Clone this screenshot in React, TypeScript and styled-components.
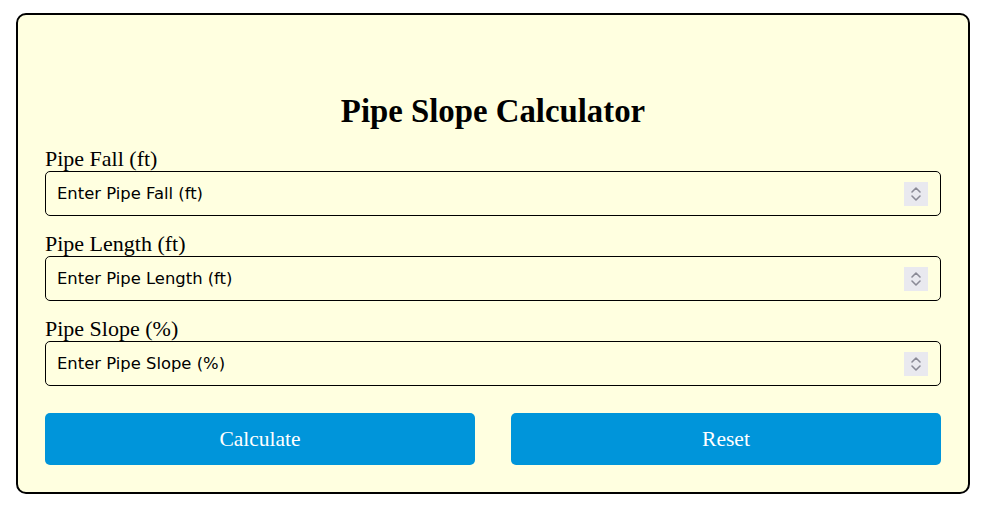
import React from "react";
import styled, { createGlobalStyle } from "styled-components";

const Global = createGlobalStyle`
  html, body { margin: 0; padding: 0; background: #ffffff; }
  body { font-family: "Liberation Serif", "Times New Roman", serif; }
  * { box-sizing: border-box; }
`;

const Page = styled.div`
  padding: 13px 13px 0 16px;
`;

const Card = styled.form`
  width: 954px;
  height: 481px;
  background: #ffffe0;
  border: 2px solid #000;
  border-radius: 10px;
  padding: 78px 27px 0 27px;
  display: flex;
  flex-direction: column;
`;

const Title = styled.h1`
  margin: 0 0 18px 0;
  text-align: center;
  font-size: 32.8px;
  line-height: 36px;
  font-weight: bold;
  color: #000;
`;

const Field = styled.div`
  display: flex;
  flex-direction: column;
  margin-bottom: 16px;
`;

const Label = styled.label`
  font-size: 22px;
  line-height: 24px;
  color: #000;
`;

const InputWrap = styled.div`
  position: relative;
  height: 45px;
`;

const Input = styled.input`
  width: 100%;
  height: 45px;
  border: 1px solid #000;
  border-radius: 5px;
  background: transparent;
  padding: 0 40px 0 11px;
  font-family: "DejaVu Sans", Verdana, sans-serif;
  font-size: 16.4px;
  color: #000;
  outline: none;
  -moz-appearance: textfield;
  &::-webkit-outer-spin-button,
  &::-webkit-inner-spin-button {
    -webkit-appearance: none;
    margin: 0;
  }
  &::placeholder {
    color: #000;
    opacity: 1;
  }
`;

const Spinner = styled.div`
  position: absolute;
  right: 13px;
  top: 11px;
  width: 24px;
  height: 24px;
  background: #e9e9ef;
  display: flex;
  align-items: center;
  justify-content: center;
`;

const Buttons = styled.div`
  display: flex;
  gap: 36px;
  margin-top: 11px;
`;

const Button = styled.button`
  flex: 1;
  height: 52px;
  border: none;
  border-radius: 5px;
  background: #0095da;
  color: #fff;
  font-family: "Liberation Serif", "Times New Roman", serif;
  font-size: 21.5px;
  cursor: pointer;
`;

const fields = [
  { id: "fall", label: "Pipe Fall (ft)" },
  { id: "length", label: "Pipe Length (ft)" },
  { id: "slope", label: "Pipe Slope (%)" },
];

const SpinIcon = () => (
  <svg width="14" height="20" viewBox="0 0 14 20" fill="none" stroke="#8a8a96" strokeWidth="1.6" strokeLinecap="round" strokeLinejoin="round">
    <path d="M3 8 L7 4 L11 8" />
    <path d="M3 12 L7 16 L11 12" />
  </svg>
);

export default function App() {
  return (
    <>
      <Global />
      <Page>
        <Card onSubmit={(e) => e.preventDefault()}>
          <Title>Pipe Slope Calculator</Title>
          {fields.map((f) => (
            <Field key={f.id}>
              <Label htmlFor={f.id}>{f.label}</Label>
              <InputWrap>
                <Input id={f.id} type="number" placeholder={`Enter ${f.label}`} />
                <Spinner>
                  <SpinIcon />
                </Spinner>
              </InputWrap>
            </Field>
          ))}
          <Buttons>
            <Button type="button">Calculate</Button>
            <Button type="reset">Reset</Button>
          </Buttons>
        </Card>
      </Page>
    </>
  );
}
